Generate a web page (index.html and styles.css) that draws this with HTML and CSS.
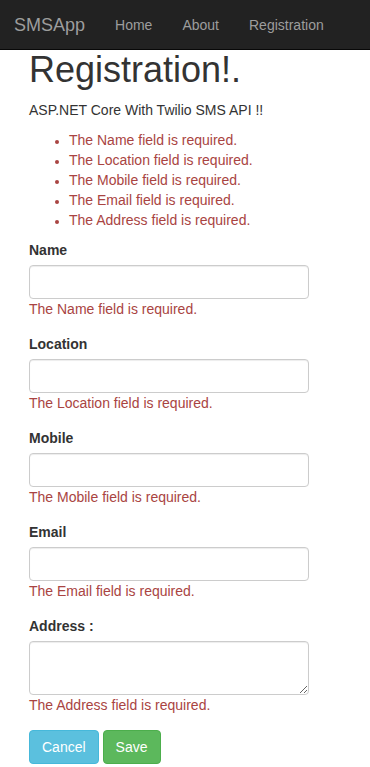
FILE: index.html
```html
<!DOCTYPE html>
<html lang="en">
<head>
    <meta charset="UTF-8">
    <meta name="viewport" content="width=device-width, initial-scale=1.0">
    <title>Registration - SMSApp</title>
    <link rel="stylesheet" href="styles.css">
</head>
<body>
    <nav class="navbar">
        <a class="navbar-brand" href="#">SMSApp</a>
        <ul class="nav">
            <li><a href="#">Home</a></li>
            <li><a href="#">About</a></li>
            <li><a href="#">Registration</a></li>
        </ul>
    </nav>

    <main class="body-content">
        <h2>Registration!.</h2>
        <p>ASP.NET Core With Twilio SMS API !!</p>

        <form>
            <div class="validation-summary">
                <ul>
                    <li>The Name field is required.</li>
                    <li>The Location field is required.</li>
                    <li>The Mobile field is required.</li>
                    <li>The Email field is required.</li>
                    <li>The Address field is required.</li>
                </ul>
            </div>

            <div class="form-group">
                <label for="name">Name</label>
                <input id="name" class="form-control" type="text">
                <span class="text-danger">The Name field is required.</span>
            </div>
            <div class="form-group">
                <label for="location">Location</label>
                <input id="location" class="form-control" type="text">
                <span class="text-danger">The Location field is required.</span>
            </div>
            <div class="form-group">
                <label for="mobile">Mobile</label>
                <input id="mobile" class="form-control" type="text">
                <span class="text-danger">The Mobile field is required.</span>
            </div>
            <div class="form-group">
                <label for="email">Email</label>
                <input id="email" class="form-control" type="text">
                <span class="text-danger">The Email field is required.</span>
            </div>
            <div class="form-group">
                <label for="address">Address :</label>
                <textarea id="address" class="form-control" rows="2"></textarea>
                <span class="text-danger">The Address field is required.</span>
            </div>

            <div class="actions">
                <button type="button" class="btn btn-info">Cancel</button>
                <button type="submit" class="btn btn-success">Save</button>
            </div>
        </form>
    </main>
</body>
</html>
```

FILE: styles.css
```css
* {
    box-sizing: border-box;
}

body {
    font-family: "Liberation Sans", Arial, sans-serif;
    font-size: 14px;
    line-height: 20px;
    margin: 0;
    padding: 0;
    background-color: #ffffff;
    color: #333333;
}

a {
    text-decoration: none;
}

.navbar {
    display: flex;
    align-items: center;
    height: 50px;
    background-color: #222222;
    border-bottom: 1px solid #080808;
}

.navbar-brand {
    font-size: 18px;
    line-height: 20px;
    padding: 15px 15px 14px 14px;
    color: #9d9d9d;
}

.nav {
    display: flex;
    list-style: none;
    margin: 0;
    padding: 0;
}

.nav a {
    display: block;
    padding: 15px;
    color: #9d9d9d;
}

.body-content {
    padding: 0 30px 20px 29px;
}

h2 {
    font-size: 36px;
    font-weight: 500;
    line-height: 1.1;
    margin: 0 0 10px;
}

p {
    margin: 0 0 10px;
}

.validation-summary ul {
    color: #a94442;
    margin: 0 0 10px;
    padding-left: 40px;
}

.validation-summary li::marker {
    font-size: 12px;
}

.form-group {
    margin-bottom: 15px;
}

label {
    display: block;
    font-weight: bold;
    margin-bottom: 5px;
}

.form-control {
    display: block;
    width: 100%;
    max-width: 280px;
    height: 34px;
    padding: 6px 12px;
    font-family: inherit;
    font-size: 14px;
    line-height: 20px;
    color: #555555;
    background-color: #ffffff;
    border: 1px solid #cccccc;
    border-radius: 4px;
    box-shadow: inset 0 1px 1px rgba(0, 0, 0, 0.075);
}

textarea.form-control {
    height: 54px;
    resize: vertical;
}

.text-danger {
    display: block;
    color: #a94442;
}

.actions {
    display: flex;
    gap: 4px;
}

.btn {
    height: 34px;
    padding: 6px 12px;
    font-family: inherit;
    font-size: 14px;
    line-height: 20px;
    color: #ffffff;
    border: 1px solid transparent;
    border-radius: 4px;
    cursor: pointer;
}

.btn-info {
    background-color: #5bc0de;
    border-color: #46b8da;
}

.btn-success {
    background-color: #5cb85c;
    border-color: #4cae4c;
}
```
